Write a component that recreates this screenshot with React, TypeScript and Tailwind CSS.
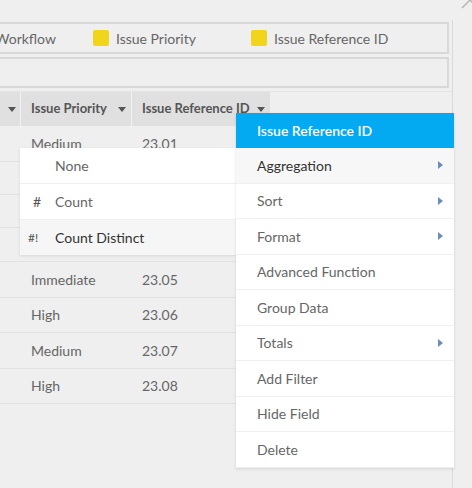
import React from "react";

const rows: [string, string, string][] = [
  ["Medium", "23.01", "h-[36px]"],
  ["High", "23.02", "h-[33px]"],
  ["Low", "23.03", "h-[33px]"],
  ["Medium", "23.04", "h-[34px]"],
  ["Immediate", "23.05", "h-[35.5px]"],
  ["High", "23.06", "h-[35.5px]"],
  ["Medium", "23.07", "h-[35.5px]"],
  ["High", "23.08", "h-[35.5px]"],
];

function Caret() {
  return (
    <svg width="8" height="5" viewBox="0 0 8 5" className="shrink-0">
      <path d="M0 0 L8 0 L4 5 Z" fill="#555" />
    </svg>
  );
}

function RightArrow() {
  return (
    <svg width="5" height="8" viewBox="0 0 5 8" className="shrink-0">
      <path d="M0 0 L5 4 L0 8 Z" fill="#6b8db8" />
    </svg>
  );
}

const menuItems: [string, boolean, boolean][] = [
  ["Aggregation", true, true],
  ["Sort", true, false],
  ["Format", true, false],
  ["Advanced Function", false, false],
  ["Group Data", false, false],
  ["Totals", true, false],
  ["Add Filter", false, false],
  ["Hide Field", false, false],
  ["Delete", false, false],
];

export default function App() {
  return (
    <div className="relative w-[472px] h-[488px] overflow-hidden bg-[#efefef] font-['Lato',sans-serif] text-[14px] text-[#666]">
      {/* close X */}
      <svg width="20" height="20" viewBox="0 0 20 20" className="absolute right-[-8px] top-[-10px]">
        <path d="M2 2 L18 18 M2 18 L18 2" stroke="#b0b0b0" strokeWidth="1.3" />
      </svg>

      <div className="mt-[20px] ml-[-40px] w-[493px] h-[468px] border-r border-[#d9d9d9] pt-[2px] flex flex-col">
        {/* panel 1 */}
        <div className="mr-[3px] h-[32px] border-2 border-[#d8d8d8] flex items-center">
          <span className="ml-[33px]">Workflow</span>
          <span className="ml-[37px] w-[16px] h-[16px] rounded-[2px] bg-[#f0d51c]" />
          <span className="ml-[7px]">Issue Priority</span>
          <span className="ml-[55px] w-[16px] h-[16px] rounded-[2px] bg-[#f0d51c]" />
          <span className="ml-[7px]">Issue Reference ID</span>
        </div>
        {/* panel 2 */}
        <div className="mr-[3px] mt-[3px] h-[31px] border-2 border-[#d8d8d8]" />

        {/* table */}
        <div className="mt-[3px] border-t border-[#e4e4e4]">
          <div className="flex h-[34px] w-[310px] bg-[#e0e0e0] text-[13px] font-bold text-[#555]">
            <div className="w-[60px] flex items-center justify-end pr-[4px]">
              <Caret />
            </div>
            <div className="w-[111px] border-l border-[#f2f2f2] flex items-center justify-between pl-[10px] pr-[5px]">
              <span>Issue Priority</span>
              <Caret />
            </div>
            <div className="w-[139px] border-l border-[#f2f2f2] flex items-center justify-between pl-[10px] pr-[5px]">
              <span>Issue Reference ID</span>
              <Caret />
            </div>
          </div>
          {rows.map(([p, id, h], i) => (
            <div key={i} className={"flex w-[310px] border-b border-[#e2e2e2] " + h}>
              <div className="w-[60px]" />
              <div className="w-[111px] flex items-center pl-[11px]">{p}</div>
              <div className="w-[139px] flex items-center pl-[11px]">{id}</div>
            </div>
          ))}
        </div>
      </div>

      {/* aggregation submenu */}
      <div className="absolute left-[20px] top-[148px] w-[217px] bg-white shadow-[0_1px_3px_rgba(0,0,0,0.10)]">
        <div className="h-[36px] flex items-center border-b border-[#f0f0f0]">
          <span className="w-[35px]" />
          <span>None</span>
        </div>
        <div className="h-[36px] flex items-center border-b border-[#f0f0f0]">
          <span className="w-[35px] pl-[13px] text-[#555]">#</span>
          <span>Count</span>
        </div>
        <div className="h-[35px] flex items-center bg-[#f6f6f6] text-[#333]">
          <span className="w-[35px] pl-[8px] text-[12px] text-[#555]">#!</span>
          <span>Count Distinct</span>
        </div>
      </div>

      {/* context menu */}
      <div className="absolute left-[236px] top-[113px] w-[218px] bg-white shadow-[0_1px_3px_rgba(0,0,0,0.12)]">
        <div className="h-[35px] bg-[#03a9f1] text-white font-semibold flex items-center pl-[21px]">
          Issue Reference ID
        </div>
        {menuItems.map(([label, arrow, active]) => (
          <div
            key={label}
            className={
              "h-[35.5px] flex items-center justify-between pl-[21px] pr-[11px] border-b border-[#f0f0f0] " +
              (active ? "bg-[#f7f7f7] text-[#333]" : "")
            }
          >
            <span>{label}</span>
            {arrow ? <RightArrow /> : null}
          </div>
        ))}
      </div>
    </div>
  );
}
